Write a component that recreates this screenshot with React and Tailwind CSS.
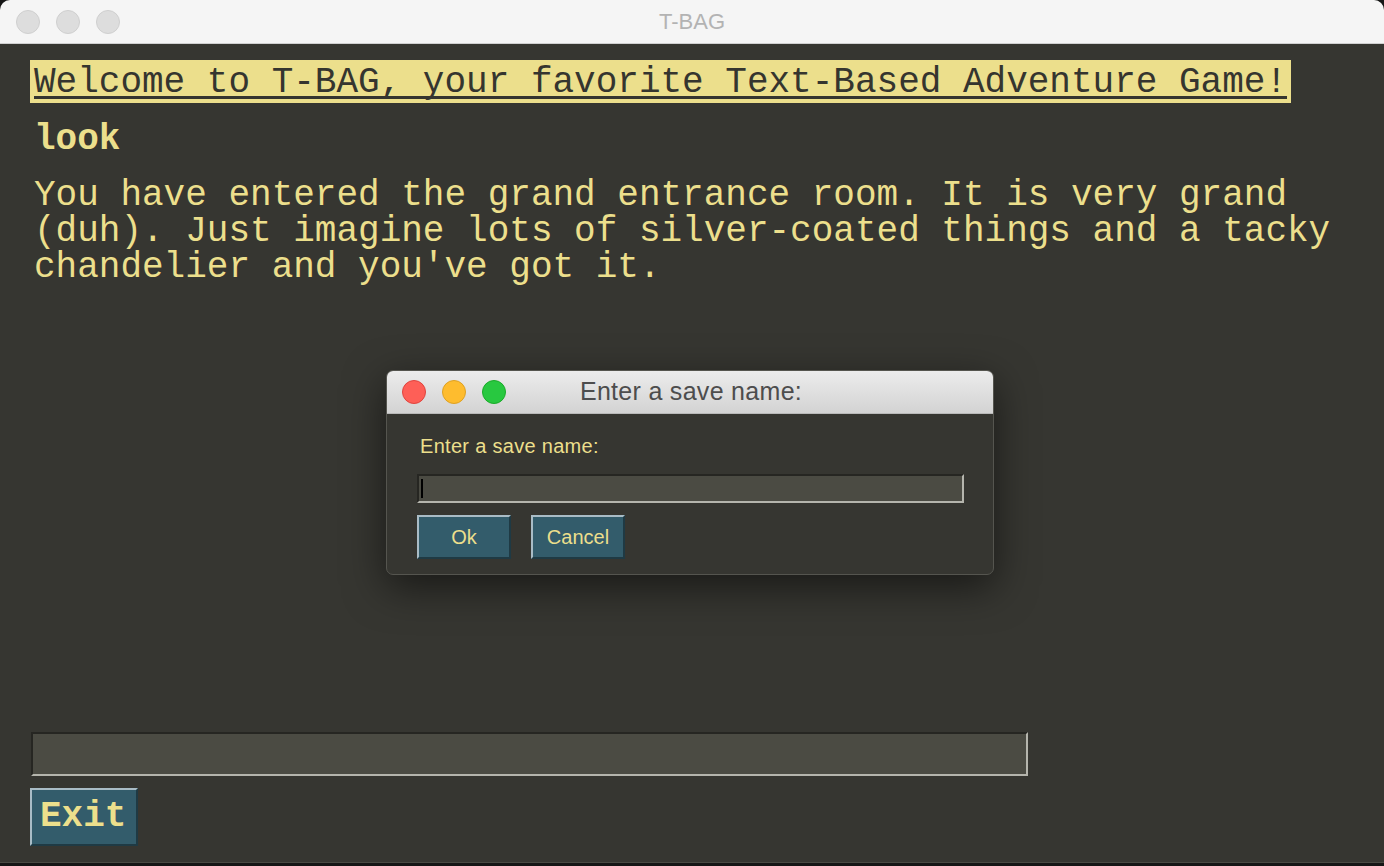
import React from 'react';

const mono = { fontFamily: '"Liberation Mono", "Courier New", monospace' };
const sans = { fontFamily: '"Liberation Sans", Arial, Helvetica, sans-serif' };

const Lights = ({ colors }) => (
  <div className="flex items-center gap-4">
    {colors.map((c, i) => (
      <div key={i} className={`w-6 h-6 rounded-full border ${c}`} />
    ))}
  </div>
);

const App = () => {
  return (
    <div className="w-[1384px] h-[866px] bg-[#161616] overflow-hidden relative">
      {/* Main window */}
      <div className="h-[863px] flex flex-col rounded-t-[10px] overflow-hidden bg-[#363631] border-b border-[#4a4a44]">
        <div className="h-[44px] bg-[#f5f5f5] border-b border-[#d0d0d0] relative flex items-center px-4">
          <Lights colors={['bg-[#dddddd] border-[#cfcfcf]', 'bg-[#dddddd] border-[#cfcfcf]', 'bg-[#dddddd] border-[#cfcfcf]']} />
          <div className="absolute inset-0 flex items-center justify-center text-[22px] text-[#b3b3b3]" style={sans}>
            T-BAG
          </div>
        </div>

        <div className="flex-1 flex flex-col px-[30px] pt-[16px] pb-[16px]" style={mono}>
          <div className="self-start bg-[#ecdf8c] px-[4px] h-[43px] flex items-start pt-[3px]">
            <span className="text-[36px] leading-[40px] text-[#35352f] underline decoration-[3px] underline-offset-[4px] [text-decoration-skip-ink:none]">
              Welcome to T-BAG, your favorite Text-Based Adventure Game!
            </span>
          </div>
          <div className="mt-[19px] pl-[4px] text-[36px] leading-[36px] font-bold text-[#ecdf8c]">look</div>
          <div className="mt-[20px] pl-[4px] text-[36px] leading-[36px] text-[#ecdf8c] whitespace-pre">
            {"You have entered the grand entrance room. It is very grand\n(duh). Just imagine lots of silver-coated things and a tacky\nchandelier and you've got it."}
          </div>

          <div className="flex-1" />

          <div className="w-[997px] h-[44px] ml-[1px] bg-[#4b4b43] border-t-2 border-l-2 border-[#262622] border-b-2 border-r-2 border-b-[#b5b5ad] border-r-[#b5b5ad]" />
          <div className="mt-[12px] self-start w-[108px] h-[58px] bg-[#335c6b] border-t-2 border-l-2 border-[#a9bcc6] border-b-2 border-r-2 border-b-[#1f3a44] border-r-[#1f3a44] flex items-center pl-[8px]">
            <span className="text-[36px] leading-[36px] font-bold text-[#ecdf8c]">Exit</span>
          </div>
        </div>
      </div>

      {/* Save dialog */}
      <div className="absolute left-[386px] top-[370px] w-[608px] h-[205px] rounded-[7px] overflow-hidden bg-[#363631] border border-[#55554f] shadow-[0_12px_40px_rgba(0,0,0,0.55)] flex flex-col" style={sans}>
        <div className="h-[43px] bg-gradient-to-b from-[#ececec] to-[#d3d3d3] border-b border-[#b9b9b9] relative flex items-center px-[15px]">
          <Lights colors={['bg-[#fe5f57] border-[#e0443e]', 'bg-[#febc2e] border-[#dea123]', 'bg-[#28c840] border-[#1aab29]']} />
          <div className="absolute inset-0 flex items-center justify-center pl-[2px] text-[25px] tracking-[0.3px] text-[#4d4d4d]">
            Enter a save name:
          </div>
        </div>
        <div className="flex flex-col px-[30px]">
          <div className="mt-[21px] pl-[3px] text-[20px] leading-[22px] tracking-[0.3px] text-[#ecdf8c]">Enter a save name:</div>
          <div className="mt-[17px] w-[547px] h-[29px] bg-[#4b4b43] border-t-2 border-l-2 border-[#262622] border-b-2 border-r-2 border-b-[#b5b5ad] border-r-[#b5b5ad] flex items-center pl-[2px]">
            <div className="w-[2px] h-[19px] bg-black" />
          </div>
          <div className="mt-[12px] flex gap-[20px]">
            <div className="w-[94px] h-[44px] bg-[#335c6b] border-t-2 border-l-2 border-[#a9bcc6] border-b-2 border-r-2 border-b-[#1f3a44] border-r-[#1f3a44] flex items-center justify-center text-[20px] text-[#ecdf8c]">
              Ok
            </div>
            <div className="w-[94px] h-[44px] bg-[#335c6b] border-t-2 border-l-2 border-[#a9bcc6] border-b-2 border-r-2 border-b-[#1f3a44] border-r-[#1f3a44] flex items-center justify-center text-[20px] text-[#ecdf8c]">
              Cancel
            </div>
          </div>
        </div>
      </div>
    </div>
  );
};

export default App;
